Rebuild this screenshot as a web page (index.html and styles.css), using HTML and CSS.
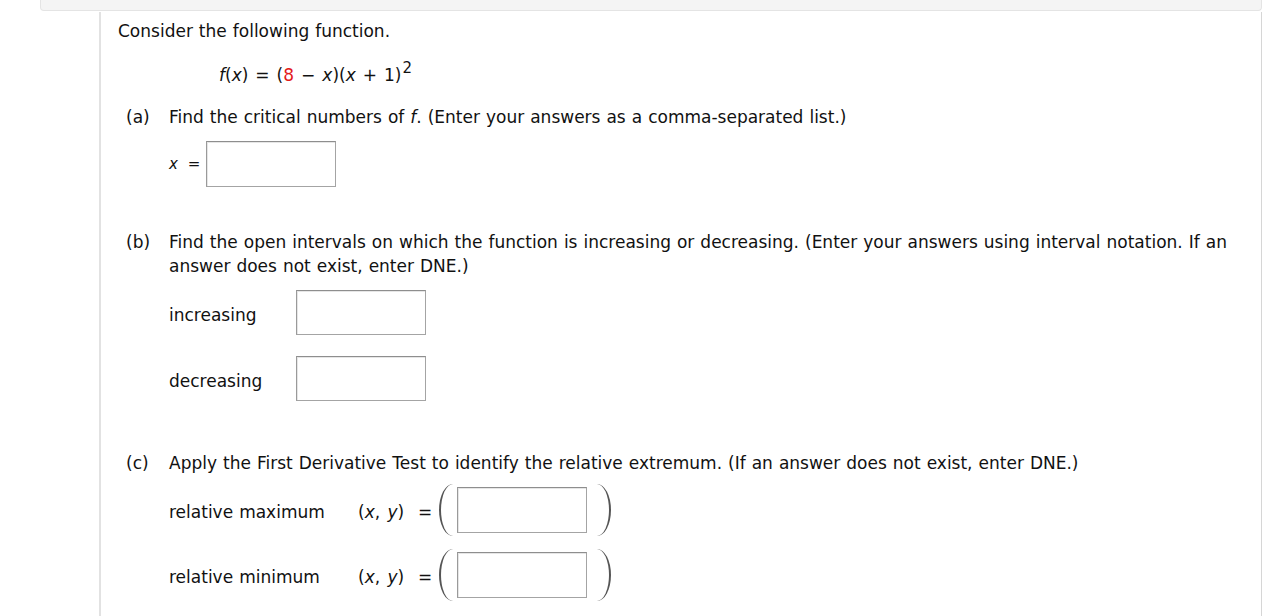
FILE: index.html
```html
<!DOCTYPE html>
<html>
<head>
<meta charset="utf-8">
<link rel="stylesheet" href="styles.css">
</head>
<body>
<div class="page">
  <div class="topbar"></div>
  <div class="question">
    <p class="intro">Consider the following function.</p>
    <p class="formula"><i>f</i>(<i>x</i>) = (<span class="red">8</span> − <i>x</i>)(<i>x</i> + 1)<sup>2</sup></p>

    <div class="part">
      <span class="tag">(a)</span>
      <div class="body">
        <p class="prompt">Find the critical numbers of <i>f</i>. (Enter your answers as a comma-separated list.)</p>
        <div class="row row-x">
          <span class="mathlabel"><i>x</i> =</span>
          <span class="box"></span>
        </div>
      </div>
    </div>

    <div class="part part-b">
      <span class="tag">(b)</span>
      <div class="body">
        <p class="prompt">Find the open intervals on which the function is increasing or decreasing. (Enter your answers using interval notation. If an answer does not exist, enter DNE.)</p>
        <div class="row row-int">
          <span class="label">increasing</span>
          <span class="box"></span>
        </div>
        <div class="row row-int row-dec">
          <span class="label">decreasing</span>
          <span class="box"></span>
        </div>
      </div>
    </div>

    <div class="part part-c">
      <span class="tag">(c)</span>
      <div class="body">
        <p class="prompt">Apply the First Derivative Test to identify the relative extremum. (If an answer does not exist, enter DNE.)</p>
        <div class="row row-ext">
          <span class="label label-ext">relative maximum</span>
          <span class="pair">(<i>x</i>, <i>y</i>)</span>
          <span class="eq">=</span>
          <span class="paren paren-l"></span>
          <span class="box"></span>
          <span class="paren paren-r"></span>
        </div>
        <div class="row row-ext row-min">
          <span class="label label-ext">relative minimum</span>
          <span class="pair">(<i>x</i>, <i>y</i>)</span>
          <span class="eq">=</span>
          <span class="paren paren-l"></span>
          <span class="box"></span>
          <span class="paren paren-r"></span>
        </div>
      </div>
    </div>
  </div>
</div>
</body>
</html>
```

FILE: styles.css
```css
html, body {
  margin: 0;
  padding: 0;
  background: #ffffff;
}

body {
  font-family: "DejaVu Sans", Verdana, sans-serif;
  font-size: 17px;
  line-height: 24px;
  color: #111;
  word-spacing: 0.6px;
  overflow: hidden;
}

p {
  margin: 0;
}

.page {
  margin-left: 40px;
  width: 1222px;
}

.topbar {
  height: 10px;
  background: #f4f4f4;
  border: 1px solid #e4e4e4;
  border-top: none;
  border-radius: 0 0 4px 4px;
}

.question {
  margin-top: 1px;
  margin-left: 59px;
  height: 605px;
  border-left: 2px solid #e2e2e2;
  border-right: 1px solid #d6d6d6;
  padding: 7px 0 0 17px;
  box-sizing: border-box;
}

.intro {
  margin-bottom: 20px;
}

.formula {
  padding-left: 101px;
  margin-bottom: 18px;
  word-spacing: 1.6px;
}

.formula sup {
  font-size: 15px;
  line-height: 0;
  vertical-align: 8px;
  margin-left: 1px;
}

.red {
  color: #e31a1a;
}

.part {
  display: grid;
  grid-template-columns: 43px 1fr;
  margin-left: 8px;
}

.tag {
  line-height: 24px;
}

.prompt {
  padding-right: 10px;
}

.row {
  display: flex;
  align-items: center;
}

.box {
  display: block;
  width: 130px;
  height: 46px;
  box-sizing: border-box;
  border: 1px solid #a4a4a4;
  border-top-color: #8e8e8e;
  border-left-color: #9a9a9a;
  box-shadow: inset 1px 1px 0 #e6e6e6;
  background: #fff;
}

.row-x {
  margin-top: 12px;
}

.mathlabel {
  width: 37px;
  font-size: 15px;
  word-spacing: 5px;
}

.part-b {
  margin-top: 43px;
}

.row-int {
  margin-top: 12px;
}

.row-int .box {
  height: 45px;
}

.row-int .label {
  padding-top: 4px;
}

.row-dec {
  margin-top: 21px;
}

.label {
  width: 127px;
}

.part-c {
  margin-top: 50px;
}

.row-ext {
  margin-top: 9px;
  height: 52px;
}

.row-ext .label,
.row-ext .pair,
.row-ext .eq {
  padding-top: 3px;
}

.row-min {
  margin-top: 13px;
}

.label-ext {
  width: 189px;
}

.pair {
  width: 60px;
  word-spacing: 2px;
}

.eq {
  width: 21px;
}

.paren {
  display: block;
  height: 52px;
  width: 14px;
  box-sizing: border-box;
}

.paren-l {
  margin-right: 4px;
  border-left: 2px solid #555;
  border-radius: 100% 0 0 100% / 50% 0 0 50%;
}

.paren-r {
  margin-left: 10px;
  border-right: 2px solid #555;
  border-radius: 0 100% 100% 0 / 0 50% 50% 0;
}
```
